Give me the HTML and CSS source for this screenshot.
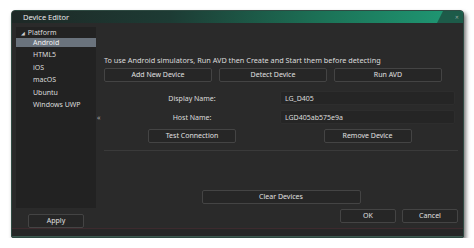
FILE: index.html
```html
<!DOCTYPE html>
<html lang="en">
<head>
    <meta charset="UTF-8">
    <title>Device Editor</title>
    <link rel="stylesheet" href="styles.css">
</head>
<body>

    <div class="window">
        <div class="titlebar">
            <span class="title">Device Editor</span>
            <span class="close-tab">&#x2715;</span>
        </div>
        <div class="content">
            <div class="sidebar">
                <div class="tree">
                    <div class="tree-root"><span class="caret">&#x25E2;</span>Platform</div>
                    <div class="tree-item selected">Android</div>
                    <div class="tree-item">HTML5</div>
                    <div class="tree-item">iOS</div>
                    <div class="tree-item">macOS</div>
                    <div class="tree-item">Ubuntu</div>
                    <div class="tree-item">Windows UWP</div>
                </div>
                <button class="btn apply">Apply</button>
            </div>
            <div class="collapse">&laquo;</div>
            <div class="main">
                <p class="hint">To use Android simulators, Run AVD then Create and Start them before detecting</p>
                <div class="actions">
                    <button class="btn">Add New Device</button>
                    <button class="btn">Detect Device</button>
                    <button class="btn">Run AVD</button>
                </div>
                <div class="form">
                    <label>Display Name:</label>
                    <div class="field">LG_D405</div>
                    <label>Host Name:</label>
                    <div class="field">LGD405ab575e9a</div>
                    <div class="cell"><button class="btn mid">Test Connection</button></div>
                    <div class="cell"><button class="btn mid">Remove Device</button></div>
                </div>
                <div class="separator"></div>
                <div class="clear-row">
                    <button class="btn wide">Clear Devices</button>
                </div>
                <div class="footer">
                    <button class="btn small">OK</button>
                    <button class="btn small">Cancel</button>
                </div>
            </div>
        </div>
        <div class="status"></div>
    </div>

</body>
</html>
```

FILE: styles.css
```css
body {
    margin: 0;
    background-color: #ffffff;
    font-family: 'Noto Sans', 'DejaVu Sans', sans-serif;
    font-size: 7px;
    color: #dcdcdc;
}
.window {
    margin: 10px 0 0 11px;
    width: 451px;
    height: 226px;
    background-color: #2a2a2a;
    border: 1px solid #2f4a42;
    border-radius: 4px 4px 2px 2px;
    box-shadow: 2px 3px 4px rgba(0, 0, 0, 0.55);
    display: flex;
    flex-direction: column;
    overflow: hidden;
}
.titlebar {
    height: 12px;
    background: linear-gradient(to right, #1e2826 0%, #1d3b34 35%, #1c7458 70%, #1f9b76 100%);
    display: flex;
    align-items: center;
    justify-content: space-between;
}
.title {
    padding-left: 11px;
    font-size: 7.5px;
    color: #e8e8e8;
}
.close-tab {
    width: 26px;
    height: 12px;
    background-color: #1d5b49;
    clip-path: polygon(6px 0, 100% 0, 100% 100%, 0 100%);
    color: #9aa8a4;
    font-size: 5px;
    display: flex;
    align-items: center;
    justify-content: flex-end;
    padding-right: 4px;
    box-sizing: border-box;
}
.content {
    flex: 1;
    display: flex;
    padding-top: 4px;
}
.sidebar {
    width: 80px;
    margin-left: 4px;
    display: flex;
    flex-direction: column;
    align-items: center;
}
.tree {
    width: 80px;
    height: 181px;
    background-color: #222222;
    padding-top: 1px;
    box-sizing: border-box;
}
.tree-root {
    height: 10px;
    line-height: 10px;
    padding-left: 5px;
}
.caret {
    font-size: 5px;
    margin-right: 3px;
    color: #cfcfcf;
}
.tree-item {
    height: 12.6px;
    line-height: 12.6px;
    padding-left: 17px;
}
.tree-item.selected {
    height: 9px;
    line-height: 9px;
    margin-bottom: 2px;
    background-color: #6a737d;
    color: #f2f2f2;
}
.collapse {
    width: 8px;
    padding-top: 86px;
    font-size: 7px;
    color: #a0a0a0;
    padding-left: 1px;
    box-sizing: border-box;
}
.main {
    flex: 1;
    display: flex;
    flex-direction: column;
    padding-right: 5px;
}
.hint {
    margin: 29px 0 3px 0;
    line-height: 9px;
    font-size: 7.3px;
}
.btn {
    font-family: 'Noto Sans', 'DejaVu Sans', sans-serif;
    font-size: 7px;
    color: #e0e0e0;
    background-color: #262626;
    border: 1px solid #444444;
    border-radius: 2px;
    height: 14px;
    padding: 0;
    line-height: 12px;
}
.actions {
    display: grid;
    grid-template-columns: 108px 108px 108px;
    gap: 7px;
}
.form {
    display: grid;
    grid-template-columns: 176px 175px;
    row-gap: 5px;
    margin-top: 9px;
    align-items: center;
}
.form label {
    text-align: center;
}
.field {
    height: 14px;
    line-height: 14px;
    background-color: #252525;
    border: 1px solid #2d2d2d;
    border-radius: 2px;
    padding-left: 4px;
    box-sizing: border-box;
}
.cell {
    display: flex;
    justify-content: center;
}
.btn.mid {
    width: 88px;
}
.separator {
    height: 1px;
    background-color: #3a3a3a;
    margin-top: 7px;
}
.clear-row {
    display: flex;
    justify-content: center;
    margin-top: 39px;
}
.btn.wide {
    width: 159px;
}
.footer {
    display: flex;
    justify-content: flex-end;
    gap: 6px;
    margin-top: 5px;
}
.btn.small {
    width: 56px;
}
.status {
    height: 9px;
    border-top: 1px solid #3d2a2e;
    background-color: #262727;
    border-bottom: 1px solid #3c5a50;
}
.apply {
    width: 56px;
    margin-top: 6px;
}
```
